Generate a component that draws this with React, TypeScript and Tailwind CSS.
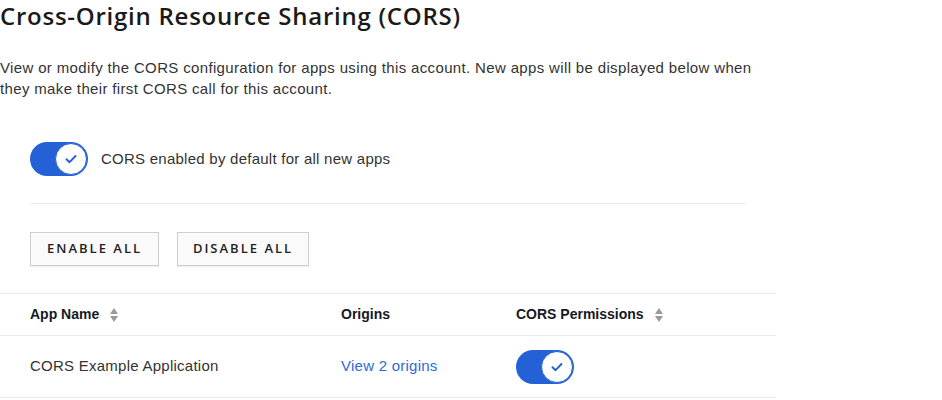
import React, { useState } from 'react';

const Toggle: React.FC<{ on: boolean; onChange: () => void }> = ({ on, onChange }) => (
  <button
    onClick={onChange}
    className={`relative w-[58px] h-[34px] rounded-full shrink-0 ${on ? 'bg-[#2460d6]' : 'bg-[#c4c8cc]'}`}
  >
    <span
      className={`absolute top-px w-[32px] h-[32px] rounded-full bg-white border border-[#2460d6] flex items-center justify-center ${on ? 'left-[25px]' : 'left-px'}`}
    >
      {on && (
        <svg width="14" height="14" viewBox="0 0 14 14" fill="none">
          <path d="M2.5 7.2 L5.6 10.2 L11.5 4" stroke="#2460d6" strokeWidth="1.9" strokeLinecap="round" strokeLinejoin="round" />
        </svg>
      )}
    </span>
  </button>
);

const SortIcon = () => (
  <svg width="10" height="16" viewBox="0 0 10 16" className="ml-[10px]">
    <path d="M5 1 L9 7 L1 7 Z" fill="#9a9a9a" />
    <path d="M5 15 L9 9 L1 9 Z" fill="#9a9a9a" />
  </svg>
);

const btn =
  'h-[34px] border border-[#cfcfcf] bg-[#fafafa] shadow-[0_1px_1px_rgba(0,0,0,0.06)] text-[13px] font-semibold tracking-[2px] text-[#1f1f1f]';

export default function App() {
  const [defaultOn, setDefaultOn] = useState(true);
  const [appOn, setAppOn] = useState(true);

  return (
    <div className="w-[942px] h-[400px] bg-white overflow-hidden text-[#16191f]" style={{ fontFamily: '"Liberation Sans", Arial, sans-serif' }}>
      <h1 className="pt-px text-[24px] leading-[30px] font-semibold tracking-[0.75px] text-[#1a1a1a]" style={{ fontFamily: '"Open Sans", sans-serif' }}>
        Cross-Origin Resource Sharing (CORS)
      </h1>
      <p className="mt-[26px] w-[770px] text-[15px] leading-[21px] tracking-[0.35px] text-[#333]">
        View or modify the CORS configuration for apps using this account. New apps will be displayed below when they make their first CORS call for this account.
      </p>

      <div className="pl-[30px] w-[747px]">
        <div className="mt-[43px] flex items-center gap-[13px]">
          <Toggle on={defaultOn} onChange={() => setDefaultOn(!defaultOn)} />
          <span className="text-[15px] tracking-[0.25px] text-[#333]">CORS enabled by default for all new apps</span>
        </div>
        <div className="mt-[27px] h-px bg-[#ececec]" />
        <div className="mt-[28px] flex gap-[18px]" style={{ fontFamily: '"Open Sans", sans-serif' }}>
          <button className={`${btn} w-[129px]`}>ENABLE ALL</button>
          <button className={`${btn} w-[132px]`}>DISABLE ALL</button>
        </div>
      </div>

      <div className="mt-[27px] w-[776px] border-t border-[#ececec]">
        <div className="grid grid-cols-[311px_175px_1fr] h-[42px] items-center border-b border-[#ececec] text-[14px] font-bold text-[#16191f]">
          <div className="pl-[30px] flex items-center">App Name<SortIcon /></div>
          <div className="pl-[30px]">Origins</div>
          <div className="pl-[30px] flex items-center">CORS Permissions<SortIcon /></div>
        </div>
        <div className="grid grid-cols-[311px_175px_1fr] h-[62px] items-center border-b border-[#ececec] text-[15px] tracking-[0.25px]">
          <div className="pl-[30px] text-[#333]">CORS Example Application</div>
          <div className="pl-[30px]"><a className="text-[#2d6bd8] cursor-pointer">View 2 origins</a></div>
          <div className="pl-[30px] flex"><Toggle on={appOn} onChange={() => setAppOn(!appOn)} /></div>
        </div>
      </div>
    </div>
  );
}
